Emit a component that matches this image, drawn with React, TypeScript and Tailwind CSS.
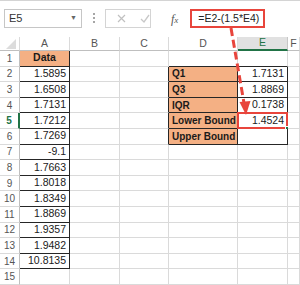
import React from 'react';

const cols = [
  { key: 'hdr', w: 'w-[20px]' },
  { key: 'A', w: 'w-[50px]' },
  { key: 'B', w: 'w-[50px]' },
  { key: 'C', w: 'w-[49px]' },
  { key: 'D', w: 'w-[69px]' },
  { key: 'E', w: 'w-[50px]' },
  { key: 'F', w: 'w-[12px]' },
];

const dataA = ['Data', '1.5895', '1.6508', '1.7131', '1.7212', '1.7269', '-9.1', '1.7663', '1.8018', '1.8349', '1.8869', '1.9357', '1.9482', '10.8135'];
const labelsD: Record<number, string> = { 2: 'Q1', 3: 'Q3', 4: 'IQR', 5: 'Lower Bound', 6: 'Upper Bound' };
const valuesE: Record<number, string> = { 2: '1.7131', 3: '1.8869', 4: '0.1738', 5: '1.4524', 6: '' };

const inTable = (r: number, c: number) =>
  (c === 1 && r >= 1 && r <= 14) || ((c === 4 || c === 5) && r >= 2 && r <= 6);

const Cell = ({ r, c }: { r: number; c: number }) => {
  const rightBlack = inTable(r, c) || inTable(r, c + 1);
  const bottomBlack = inTable(r, c) || inTable(r + 1, c);
  const orange = (c === 1 && r === 1) || (c === 4 && r >= 2 && r <= 6);
  let content: React.ReactNode = null;
  let align = 'justify-end';
  if (c === 1 && r === 1) {
    content = <span className="font-bold">Data</span>;
    align = 'justify-center';
  } else if (c === 1 && r <= 14) {
    content = dataA[r - 1];
  } else if (c === 4 && labelsD[r]) {
    content = <span className="font-bold text-[10px]">{labelsD[r]}</span>;
    align = 'justify-start';
  } else if (c === 5 && r >= 2 && r <= 6) {
    content = valuesE[r];
  }
  return (
    <div
      className={`${cols[c].w} h-full shrink-0 relative flex items-center whitespace-nowrap px-[3px] border-r border-b text-[10.5px] text-[#1a1a1a] ${align} ${
        rightBlack ? 'border-r-[#262626]' : 'border-r-[#dadada]'
      } ${bottomBlack ? 'border-b-[#262626]' : 'border-b-[#dadada]'} ${orange ? 'bg-[#f4b084]' : 'bg-white'}`}
    >
      {content}
      {c === 5 && r === 5 && (
        <>
          <div className="absolute -left-px -top-px -right-px -bottom-px border-2 border-[#e8453c]" />
          <div className="absolute -right-[2px] -bottom-[2px] w-[4px] h-[4px] bg-[#217346] border border-white" />
        </>
      )}
    </div>
  );
};

export default function App() {
  const rows = Array.from({ length: 15 }, (_, i) => i + 1);
  return (
    <div className="relative w-[300px] h-[285px] overflow-hidden bg-white font-['Liberation_Sans',sans-serif]">
      <div className="h-[37px] border-t border-[#d4d4d4] flex items-start pt-[8px]">
        <div className="ml-[4px] w-[78px] h-[19px] border border-[#c6c6c6] flex items-center justify-between pl-[4px] pr-[4px] text-[11px] text-[#333]">
          <span>E5</span>
          <span className="text-[7px] text-[#666]">▼</span>
        </div>
        <div className="ml-[11px] mt-[4px] flex flex-col gap-[2px]">
          <span className="w-[2px] h-[2px] bg-[#a6a6a6]" />
          <span className="w-[2px] h-[2px] bg-[#a6a6a6]" />
          <span className="w-[2px] h-[2px] bg-[#a6a6a6]" />
        </div>
        <div className="ml-[10px] w-[46px] h-[19px] border border-[#d4d4d4] flex items-center gap-[14px] pl-[11px]">
          <svg width="9" height="9" viewBox="0 0 9 9">
            <path d="M1 1 L8 8 M8 1 L1 8" stroke="#c0c0c0" strokeWidth="1.2" />
          </svg>
          <svg width="10" height="9" viewBox="0 0 10 9">
            <path d="M1 5 L4 8 L9 1" stroke="#c8c8c8" strokeWidth="1.3" fill="none" />
          </svg>
        </div>
        <div className="ml-[20px] mt-[1px] text-[12px] italic text-[#555] font-['Liberation_Serif',serif]">
          f<span className="text-[9px]">x</span>
        </div>
        <div className="ml-[12px] w-[75px] h-[19px] border-2 border-[#e8453c] flex items-center whitespace-nowrap pl-[6px] text-[10.5px] text-[#222]">
          =E2-(1.5*E4)
        </div>
      </div>

      <div className="flex h-[14px]">
        {cols.map((col, c) => (
          <div
            key={col.key}
            className={`${col.w} shrink-0 flex items-center justify-center text-[10.5px] ${
              c === 5
                ? 'bg-[#e1e1e1] border-b-2 border-b-[#217346] text-[#217346] border-r border-r-[#c6c6c6]'
                : 'bg-white border-b border-b-[#bfbfbf] text-[#555] border-r border-r-[#dadada]'
            }`}
          >
            {c === 0 ? (
              <svg width="12" height="12" viewBox="0 0 12 12" className="ml-[2px] mt-[1px]">
                <path d="M11 1 L11 11 L1 11 Z" fill="#dcdcdc" />
              </svg>
            ) : (
              col.key
            )}
          </div>
        ))}
      </div>

      {rows.map((r) => (
        <div key={r} className="flex h-[15.6px]">
          <div
            className={`w-[20px] shrink-0 h-full flex items-center justify-center text-[10px] border-b border-b-[#dadada] ${
              r === 5
                ? 'font-bold text-[#217346] border-r-2 border-r-[#217346]'
                : 'text-[#555] border-r border-r-[#bfbfbf]'
            }`}
          >
            {r}
          </div>
          {[1, 2, 3, 4, 5, 6].map((c) => (
            <Cell key={c} r={r} c={c} />
          ))}
        </div>
      ))}

      <svg className="absolute left-0 top-0 pointer-events-none" width="300" height="285" viewBox="0 0 300 285">
        <path d="M231 28 L244 103" stroke="#e8453c" strokeWidth="3" strokeDasharray="8 4" fill="none" />
        <path d="M239.5 102 L250.5 101 L246 115 Z" fill="#e8453c" />
      </svg>
    </div>
  );
}
